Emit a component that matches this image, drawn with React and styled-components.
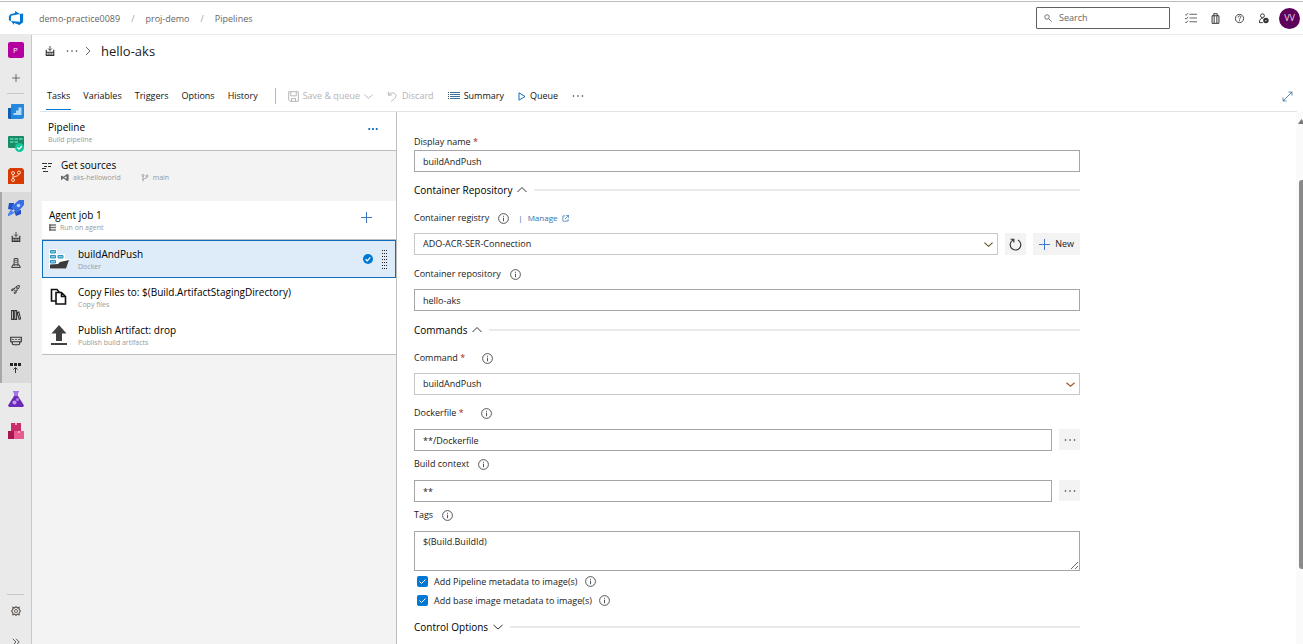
import React from 'react';
import styled, { createGlobalStyle } from 'styled-components';

const GlobalStyle = createGlobalStyle`
  *, *::before, *::after {
    margin: 0;
    padding: 0;
    box-sizing: border-box;
  }
  body {
    background: #fff;
    color: #212121;
    font-family: "Segoe UI", "Open Sans", "Noto Sans", sans-serif;
    font-size: 9px;
    line-height: 16px;
    overflow: hidden;
  }
  button, input, select, textarea {
    font: inherit;
    color: inherit;
  }
  button {
    background: none;
    border: none;
  }
  a {
    color: inherit;
    text-decoration: none;
  }
  svg {
    display: block;
    flex: none;
  }
`;

/* ---------- shell ---------- */

const Page = styled.div`
  display: flex;
  flex-direction: column;
  height: 100vh;
`;

const Header = styled.header`
  display: flex;
  align-items: center;
  flex: none;
  height: 34px;
  margin-top: 1px;
  padding: 0 3px 0 8px;
  border-top: 1px solid #bdbdbd;
  border-bottom: 1px solid #eaeaea;
`;

const Breadcrumb = styled.nav`
  display: flex;
  gap: 11px;
  flex: 1;
  margin-left: 15px;
  padding-top: 1px;
  color: #666;
`;

const Slash = styled.span`
  color: #a6a6a6;
`;

const SearchBox = styled.label`
  display: flex;
  align-items: center;
  gap: 7px;
  width: 134px;
  height: 22px;
  padding: 0 7px;
  border: 1px solid #5f5f5f;
  border-radius: 1px;

  input {
    flex: 1;
    min-width: 0;
    border: none;
    outline: none;
    background: none;
  }
  input::placeholder {
    color: #666;
    opacity: 1;
  }
`;

const HeaderActions = styled.div`
  display: flex;
  align-items: center;
  gap: 13px;
  margin: 0 10px 0 15px;
`;

const IconButton = styled.button`
  display: flex;
  align-items: center;
  justify-content: center;
  color: ${(p) => p.$color || '#333'};
`;

const Avatar = styled.button`
  width: 21px;
  height: 21px;
  border-radius: 50%;
  background: #5c005c;
  color: #e8d5e8;
`;

const Columns = styled.div`
  display: flex;
  flex: 1;
  min-height: 0;
`;

/* ---------- side bar ---------- */

const SideBar = styled.nav`
  display: flex;
  flex-direction: column;
  flex: none;
  width: 32px;
  background: #eaeaea;
  border-right: 1px solid #c8c8c8;
`;

const SideTop = styled.div`
  display: flex;
  flex-direction: column;
  align-items: center;
  flex: 1;
  min-height: 0;
`;

const Project = styled.a`
  width: 16px;
  height: 16px;
  margin-top: 7px;
  border-radius: 2px;
  background: #b4009e;
  color: #fff;
  font-size: 8px;
  text-align: center;
`;

const AddButton = styled(IconButton)`
  height: 35px;
  padding-top: 5px;
`;

const SideRule = styled.hr`
  width: 17px;
  margin-bottom: ${(p) => p.$below || 0}px;
  border: none;
  border-top: 1px solid #c8c8c8;
`;

const Hub = styled.a`
  display: flex;
  align-items: center;
  justify-content: center;
  width: 31px;
  height: 32px;
`;

const HubGroup = styled.div`
  width: 31px;
  padding-bottom: 3px;
  background: #dadada;
  border-left: 2px solid #a8a8a8;
`;

const GroupHub = styled(Hub)`
  width: 27px;
`;

const SubHub = styled(GroupHub)`
  height: 26px;
  color: #333;
`;

const SideBottom = styled.div`
  display: flex;
  flex-direction: column;
  align-items: center;
  height: 50px;
  overflow: hidden;
`;

const FootButton = styled(IconButton)`
  flex: none;
  height: 31px;
`;

/* ---------- title and tool bar ---------- */

const Main = styled.main`
  display: flex;
  flex-direction: column;
  flex: 1;
  min-width: 0;
`;

const TitleRow = styled.div`
  display: flex;
  align-items: center;
  height: 32px;
  padding-left: 13px;
  gap: 5px;
`;

const Crumb = styled.a`
  padding-right: 6px;
`;

const Title = styled.h1`
  margin-left: 3px;
  font-size: 13px;
  font-weight: 400;
`;

const ToolBar = styled.div`
  display: flex;
  align-items: flex-end;
  height: 45px;
  margin: 0 6px 0 8px;
  padding: 0 4px 0 6px;
  border-bottom: 1px solid #e4e4e4;
`;

const Tabs = styled.div`
  display: flex;
  gap: 11px;
`;

const Tab = styled.button`
  height: 25px;
  padding: 3px 1px 5px;
  border-bottom: 1px solid ${(p) => (p.$active ? '#0078d4' : 'transparent')};
  color: #111;
  margin-bottom: 1px;
`;

const Commands = styled.div`
  display: flex;
  align-items: center;
  flex: 1;
  gap: 14px;
  height: 16px;
  margin: 0 0 7px 16px;
  padding-left: 12px;
  border-left: 1px solid #b5b5b5;
`;

const Command = styled.button`
  display: flex;
  align-items: center;
  gap: 4px;
  color: #111;

  &:disabled {
    color: #b4b4b4;
  }
`;

const Expand = styled(IconButton)`
  margin-left: auto;
`;

const Workspace = styled.div`
  display: flex;
  flex: 1;
  min-height: 0;
`;

/* ---------- process list ---------- */

const Process = styled.section`
  flex: none;
  width: 365px;
  background: #f3f3f3;
  border-right: 1px solid #bdbdbd;
`;

const ProcessHead = styled.div`
  display: flex;
  justify-content: space-between;
  height: 39px;
  padding: 8px 18px 0 16px;
  background: #fff;
  border-bottom: 1px solid #bdbdbd;
`;

const HeadAction = styled(IconButton)`
  height: 18px;
`;

const Name = styled.div`
  color: #000;
  font-size: 10px;
  line-height: 14px;
`;

const Sub = styled.div`
  display: flex;
  align-items: center;
  gap: 4px;
  color: #999;
  font-size: 7px;
  line-height: 11px;
`;

const Sources = styled.div`
  display: flex;
  gap: 9px;
  height: 50px;
  padding: 7px 10px;

  > svg {
    margin-top: 5px;
  }
`;

const Branch = styled.span`
  display: flex;
  align-items: center;
  gap: 4px;
  margin-left: 16px;
`;

const Job = styled.div`
  margin-left: 10px;
  background: #fff;
  border-bottom: 1px solid #bdbdbd;
`;

const JobHead = styled.div`
  display: flex;
  justify-content: space-between;
  height: 39px;
  padding: 7px 24px 0 7px;
  border-bottom: 1px solid #bdbdbd;
`;

const Task = styled.div`
  display: flex;
  align-items: center;
  gap: 9px;
  height: 38px;
  padding: 0 8px 0 6px;
  border: 1px solid ${(p) => (p.$selected ? '#106ebe' : 'transparent')};
  background: ${(p) => (p.$selected ? '#deecf9' : 'transparent')};
`;

const TaskText = styled.div`
  flex: 1;
`;

/* ---------- settings form ---------- */

const Form = styled.form`
  flex: 1;
  min-width: 0;
  padding: 22px 0 0 17px;
  overflow: hidden;
`;

const Fields = styled.div`
  max-width: 666px;
`;

const LabelRow = styled.div`
  display: flex;
  align-items: center;
  gap: 9px;
  height: 16px;
  margin-bottom: ${(p) => p.$below || 0}px;
`;

const Required = styled.span`
  margin-right: 8px;
  color: #a4262c;
`;

const Manage = styled.a`
  display: flex;
  align-items: center;
  gap: 5px;
  color: #2f6fae;
  font-size: 8px;

  &::before {
    content: "|";
  }
`;

const ControlRow = styled.div`
  display: flex;
  gap: 7px;
  margin-bottom: ${(p) => p.$below}px;
`;

const TextInput = styled.input`
  flex: 1;
  min-width: 0;
  height: 22px;
  padding: 0 8px;
  border: 1px solid #a6a6a6;
  background: #fff;
`;

const TextArea = styled.textarea`
  display: block;
  width: 100%;
  height: 40px;
  padding: 2px 8px;
  border: 1px solid #a6a6a6;
  resize: vertical;
`;

const SelectWrap = styled.div`
  display: grid;
  flex: 1;
  align-items: center;

  > * {
    grid-area: 1 / 1;
  }
  svg {
    justify-self: end;
    margin-right: 5px;
    pointer-events: none;
  }
`;

const SelectBox = styled.select`
  appearance: none;
  height: 22px;
  padding: 0 8px;
  border: 1px solid #c8c8c8;
  background: #fff;
`;

const SquareButton = styled.button`
  display: flex;
  align-items: center;
  justify-content: center;
  gap: 5px;
  min-width: 21px;
  height: ${(p) => p.$height || 22}px;
  padding: 0 ${(p) => p.$pad || 0}px;
  background: #f3f3f3;
  color: #222;
`;

const SectionHead = styled.button`
  display: flex;
  align-items: center;
  width: 100%;
  height: 16px;
  gap: 5px;
  margin-bottom: 12px;
  color: #000;
  font-size: 10px;

  &::after {
    content: "";
    flex: 1;
    height: 2px;
    margin-left: 2px;
    background: #eaeaea;
  }
`;

const Checks = styled.div`
  padding: 1px 0 9px 3px;
`;

const CheckRow = styled.div`
  display: flex;
  align-items: center;
  gap: 7px;
  height: 19px;

  label {
    display: flex;
    align-items: center;
    gap: 6px;
  }
`;

const CheckMark = styled.span`
  display: grid;
  place-items: center;

  > * {
    grid-area: 1 / 1;
  }
  input {
    appearance: none;
    width: 11px;
    height: 11px;
    border-radius: 2px;
    background: #0078d4;
  }
  svg {
    pointer-events: none;
  }
`;

const ScrollTrack = styled.div`
  display: flex;
  flex-direction: column;
  align-items: flex-end;
  flex: none;
  width: 7px;
  padding-top: 7px;
  background: #fafafa;
  overflow: hidden;
`;

const ScrollThumb = styled.div`
  flex: none;
  width: 4px;
  height: 74%;
  margin-top: 56px;
  border-radius: 3px 0 0 3px;
  background: #8a8a8a;
`;

/* ---------- icons ---------- */

const Line = ({ size = 10, box = 16, w = 1.4, color = 'currentColor', children }) => (
  <svg
    width={size}
    height={size}
    viewBox={`0 0 ${box} ${box}`}
    fill="none"
    stroke={color}
    strokeWidth={w}
    aria-hidden="true"
  >
    {children}
  </svg>
);

const DevOpsLogo = () => (
  <svg width="16" height="16" viewBox="0 0 18 18" aria-hidden="true">
    <path fill="#0078d4" d="M17 4v9.700l-4 3.300-6.200-2.300V17L3.300 12.400l10.200.8V4.500zM13.600 4.500 7.900 1v2.300L2.600 4.900 1 6.900v4.700l2.300 1V6.500z" />
  </svg>
);

const Dots = ({ color = '#333', width = 12, r = 0.8 }) => (
  <svg width={width} height="4" viewBox="0 0 12 4" fill={color} aria-hidden="true">
    <circle cx="1.500" cy="2" r={r} />
    <circle cx="6" cy="2" r={r} />
    <circle cx="10.500" cy="2" r={r} />
  </svg>
);

const Chevron = ({ d, size = 10, color = '#333', w = 1 }) => (
  <Line size={size} box={10} w={w} color={color}>
    <path d={d} />
  </Line>
);

const UP = 'M.5 7 5 2.500 9.500 7';
const DOWN = 'M.5 3 5 7l4.500-4';

const InfoIcon = () => (
  <Line size={11} box={11} w={0.9} color="#444">
    <circle cx="5.500" cy="5.500" r="4.900" />
    <path d="M5.500 4.700v3.500M5.500 2.800v1" />
  </Line>
);

const PlusIcon = ({ color = '#3f78c9', size = 11 }) => (
  <Line size={size} box={11} w={1} color={color}>
    <path d="M5.500 0v11M0 5.500h11" />
  </Line>
);

const BuildIcon = () => (
  <Line size={10} color="#333">
    <path d="M8 0v7M5 4l3 3 3-3" />
    <path d="M2 6v9h12V6M2 10h12" strokeWidth="1.800" />
    <path d="M5 10v5M8 10v5M11 10v5" />
  </Line>
);

const OverviewIcon = () => (
  <svg width="16" height="16" viewBox="0 0 16 16" aria-hidden="true">
    <path fill="#0f5fb0" d="M0 4h11v11H1.500A1.500 1.500 0 0 1 0 13.500z" />
    <path fill="#2488dc" d="M4 0h12v12.500A2.500 2.500 0 0 1 13.500 15H3V1a1 1 0 0 1 1-1z" />
    <path fill="#b5dcfa" d="M5.500 9h2.500v2H5.500zM8 6.500h2.500V11H8zM10.500 3.500h3V11h-3z" />
  </svg>
);

const BoardsIcon = () => (
  <svg width="16" height="16" viewBox="0 0 16 16" aria-hidden="true">
    <rect width="16" height="12" rx="1" fill="#1b8a68" />
    <path fill="#45c79a" d="M2 2h3.500v2H2zM2 5h3.500v2H2zM6.500 2H10v2H6.500zM11 2h3.500v2H11zM6.500 5H10v2H6.500z" />
    <circle cx="11.500" cy="11.500" r="4.500" fill="#14c79a" />
    <path d="m9.300 11.500 1.700 1.700 3-3.200" fill="none" stroke="#fff" strokeWidth="1.200" />
  </svg>
);

const ReposIcon = () => (
  <svg width="16" height="16" viewBox="0 0 16 16" aria-hidden="true">
    <path fill="#d83b01" d="M2 0h12l2 2v14H0V2z" />
    <g fill="none" stroke="#ffd9c9" strokeWidth="1">
      <circle cx="5" cy="5" r="1.500" />
      <circle cx="11" cy="4.500" r="1.500" />
      <circle cx="5" cy="12" r="1.500" />
      <path d="M5 6.500v4M11 6c0 3-6 1.500-6 4.500" />
    </g>
  </svg>
);

const PipelinesIcon = () => (
  <svg width="16" height="16" viewBox="0 0 16 16" aria-hidden="true">
    <path fill="#2350c0" d="M6 3H1L0 9l5 1zM13 10v4l-5 2-2-5z" />
    <path fill="#3a6fe4" d="M16 0v5l-7 8-6-6 8-7z" />
    <path fill="#4f86ee" d="m3 9.500 3.500 3.500L1 16H0v-2z" />
    <circle cx="10.500" cy="5.500" r="1.800" fill="#bcd0ff" />
  </svg>
);

const TestIcon = () => (
  <svg width="16" height="16" viewBox="0 0 16 16" aria-hidden="true">
    <path fill="#a577e6" d="M5 0h6v1.500h-1V6H6V1.500H5z" />
    <path fill="#6a2bb8" d="M6 5h4l6 9.500-1 1.500H1L0 14.500z" />
    <circle cx="6.500" cy="11.500" r="2" fill="#c39bf2" />
    <circle cx="9.500" cy="8.500" r="1.500" fill="#b085ea" />
  </svg>
);

const ArtifactsIcon = () => (
  <svg width="16" height="16" viewBox="0 0 16 16" aria-hidden="true">
    <path fill="#cb2d6a" d="M3 0h10v8H3z" />
    <path fill="#a91752" d="M0 8h6v8H0z" />
    <path fill="#e85c92" d="M6 8h10v8H6z" />
    <path fill="#f7a3c3" d="M10 8h2v2h-2zM7 0h2v2H7z" />
  </svg>
);

const EnvIcon = () => (
  <Line size={10}>
    <path d="M5 12V1h6v11M1 15l2-4h10l2 4zM7 4h2M7 7h2" strokeWidth="1.600" />
  </Line>
);

const ReleaseIcon = () => (
  <Line size={9}>
    <path d="M15 1c-5 0-8 3-10 7l3 3c4-2 7-5 7-10zM6 7H2l-1 3h3M9 10v4l-3 1v-3" strokeWidth="1.700" />
    <circle cx="10.500" cy="5.500" r="1.500" />
  </Line>
);

const LibraryIcon = () => (
  <Line size={10}>
    <path d="M1 1v14h3V1zM6 1v14h3V1zM10 4l2.500-1 3 11-2.500 1z" strokeWidth="1.700" />
  </Line>
);

const TaskGroupIcon = () => (
  <Line size={12}>
    <path d="M1 3h14v6H1zM3 9v2c0 1 1 2 2 2h6c1 0 2-1 2-2V9M3 6h2M7 6h2M11 6h2" strokeWidth="1.600" />
  </Line>
);

const DeployIcon = () => (
  <svg width="11" height="11" viewBox="0 0 11 11" aria-hidden="true">
    <path fill="#222" d="M0 1h3v3H0zM4 1h3v3H4zM8 1h3v3H8z" />
    <path d="M5.500 11V6M3.500 7.500l2-2 2 2" fill="none" stroke="#333" />
  </svg>
);

const GearIcon = () => (
  <Line size={10} color="#5d5550">
    <circle cx="8" cy="8" r="2.500" />
    <path d="m8 1 2 2 3-1v3l2 3-2 3v3l-3-1-2 2-2-2-3 1v-3L1 8l2-3V2l3 1z" strokeWidth="1.800" />
  </Line>
);

const SourcesIcon = () => (
  <svg width="10" height="9" viewBox="0 0 10 9" stroke="#333" aria-hidden="true">
    <path d="M0 .5h5M6 .5h4M2 3.500h3M6 3.500h3M0 5.500h4M1 8.500h5" />
  </svg>
);

const VsIcon = () => (
  <svg width="8" height="7" viewBox="0 0 8 7" fill="none" stroke="#666" aria-hidden="true">
    <path d="M.5 2v3L6 .8v5.400L.5 2M7 .5v6" strokeWidth="1.200" />
  </svg>
);

const BranchIcon = () => (
  <Line size={8} color="#888">
    <circle cx="4" cy="3" r="2" />
    <circle cx="12" cy="4" r="2" />
    <path d="M4 5v10M12 6c0 4-8 2-8 6" />
  </Line>
);

const AgentIcon = () => (
  <svg width="7" height="7" viewBox="0 0 7 7" stroke="#777" aria-hidden="true">
    <path d="M0 1h7M0 3.500h7M0 6h7" strokeWidth="1.600" />
    <path d="M1 .5v6" stroke="#444" />
  </svg>
);

const DockerTaskIcon = () => (
  <svg width="20" height="20" viewBox="0 0 20 20" aria-hidden="true">
    <path fill="#fff" d="M0 0h8v5h8v5h4l-3 10H0z" />
    <path
      d="M1.500 1.500h5v2.500h-5zM1.500 6.500h5V9h-5zM9 6.500h5V9H9zM1.500 11.500h5V14h-5z"
      fill="#7fc8e8"
      stroke="#2f93bf"
    />
    <path fill="#3b3b3b" d="M1 15.500 9 15l2-2 9-2-3 8.500H1z" />
  </svg>
);

const CopyIcon = () => (
  <Line size={20} box={20} w={1.6} color="#111">
    <path d="M7 14H2.500V2.500H8l2.500 3" />
    <path d="M7 5.500h5.500L16.500 9.500V17H7zM12.500 5.500v4h4" />
  </Line>
);

const PublishIcon = () => (
  <svg width="20" height="22" viewBox="0 0 20 22" fill="#404040" aria-hidden="true">
    <path d="M10 1l7.500 8.500H13V17H7V9.500H2.500zM2 19h16v2H2z" />
  </svg>
);

const CheckBadge = () => (
  <svg width="10" height="10" viewBox="0 0 10 10" aria-hidden="true">
    <circle cx="5" cy="5" r="5" fill="#0078d4" />
    <path d="m2.600 5.200 1.700 1.600 3-3.400" fill="none" stroke="#fff" strokeWidth="1.200" />
  </svg>
);

const Grip = () => (
  <svg width="5" height="19" viewBox="0 0 5 19" stroke="#222" strokeDasharray="1 2" aria-hidden="true">
    <path d="M.5 0v19M2.500 0v19M4.500 0v19" />
  </svg>
);

const SaveIcon = () => (
  <Line size={11}>
    <path d="M1 1h14v14H3l-2-2zM4 1v6h8V1M5 15v-4h6v4" />
  </Line>
);

const UndoIcon = () => (
  <Line size={11}>
    <path d="M2 1v5h5M2 6c2-4 11-5 11 1 0 3-3 5-7 8" />
  </Line>
);

const SummaryIcon = () => (
  <svg width="12" height="8" viewBox="0 0 12 8" shapeRendering="crispEdges" aria-hidden="true">
    <path d="M0 .5h1M0 2.500h1M0 4.500h1M0 6.500h1" stroke="#555" />
    <path d="M2 .5h10M2 2.500h10M2 4.500h10M2 6.500h10" stroke="#3f6f9f" />
  </svg>
);

const PlayIcon = () => (
  <svg width="8" height="9" viewBox="0 0 8 9" fill="none" stroke="#106ebe" aria-hidden="true">
    <path d="M1 .8v7.400l6-3.700z" />
  </svg>
);

const Info = ({ about }) => (
  <IconButton type="button" aria-label={`About ${about}`}>
    <InfoIcon />
  </IconButton>
);

/* ---------- parts ---------- */

const tabs = ['Tasks', 'Variables', 'Triggers', 'Options', 'History'];

const subHubs = [
  ['Builds', BuildIcon],
  ['Environments', EnvIcon],
  ['Releases', ReleaseIcon],
  ['Library', LibraryIcon],
  ['Task groups', TaskGroupIcon],
  ['Deployment groups', DeployIcon],
];

const tasks = [
  { name: 'buildAndPush', type: 'Docker', Icon: DockerTaskIcon, selected: true },
  { name: 'Copy Files to: $(Build.ArtifactStagingDirectory)', type: 'Copy files', Icon: CopyIcon },
  { name: 'Publish Artifact: drop', type: 'Publish build artifacts', Icon: PublishIcon },
];

const checks = [
  ['pipelineMeta', 'Add Pipeline metadata to image(s)'],
  ['baseMeta', 'Add base image metadata to image(s)'],
];

function TopBar() {
  return (
    <Header>
      <a href="#home" aria-label="Azure DevOps">
        <DevOpsLogo />
      </a>
      <Breadcrumb>
        <a href="#org">demo-practice0089</a>
        <Slash>/</Slash>
        <a href="#project">proj-demo</a>
        <Slash>/</Slash>
        <a href="#pipelines">Pipelines</a>
      </Breadcrumb>
      <SearchBox>
        <Line size={8} color="#444">
          <circle cx="6" cy="6" r="4.500" />
          <path d="m9.500 9.500 6 6" />
        </Line>
        <input type="search" placeholder="Search" aria-label="Search" />
      </SearchBox>
      <HeaderActions>
        <IconButton aria-label="Work items">
          <Line size={12} w={1.1} color="#444">
            <path d="M6 3h10M6 8h10M6 13h10M0 3l1.500 1.500L4 1.500M0 8l1.500 1.500L4 6.500M0 13l1.500 1.500L4 11.500" />
          </Line>
        </IconButton>
        <IconButton aria-label="Marketplace">
          <Line size={11}>
            <path d="M3 4h10v11H3zM5.500 4V1h5v3M6 4v11M10 4v11" />
          </Line>
        </IconButton>
        <IconButton aria-label="Help">
          <Line size={11} color="#444">
            <circle cx="8" cy="8" r="6" />
            <path d="M6 6.500c0-3 4-3 4-.5 0 1.500-2 1.500-2 3.500M8 10.500V12" />
          </Line>
        </IconButton>
        <IconButton aria-label="User settings">
          <Line size={11}>
            <circle cx="6.500" cy="4" r="2.800" />
            <path d="M7 14H2c0-4 2-6.500 5-6.500" />
            <circle cx="11.500" cy="11" r="2.500" strokeWidth="3" />
          </Line>
        </IconButton>
      </HeaderActions>
      <Avatar aria-label="Account">VV</Avatar>
    </Header>
  );
}

function SideNav() {
  return (
    <SideBar>
      <SideTop>
        <Project href="#project">P</Project>
        <AddButton aria-label="Add">
          <PlusIcon color="#444" size={8} />
        </AddButton>
        <SideRule $below={2} />
        <Hub href="#overview" aria-label="Overview">
          <OverviewIcon />
        </Hub>
        <Hub href="#boards" aria-label="Boards">
          <BoardsIcon />
        </Hub>
        <Hub href="#repos" aria-label="Repos">
          <ReposIcon />
        </Hub>
        <HubGroup>
          <GroupHub href="#pipelines" aria-label="Pipelines">
            <PipelinesIcon />
          </GroupHub>
          {subHubs.map(([label, Icon]) => (
            <SubHub key={label} href="#hub" aria-label={label}>
              <Icon />
            </SubHub>
          ))}
        </HubGroup>
        <Hub href="#tests" aria-label="Test plans">
          <TestIcon />
        </Hub>
        <Hub href="#artifacts" aria-label="Artifacts">
          <ArtifactsIcon />
        </Hub>
      </SideTop>
      <SideBottom>
        <SideRule />
        <FootButton aria-label="Project settings">
          <GearIcon />
        </FootButton>
        <FootButton aria-label="Expand navigation">
          <Line size={8} box={10} w={1.2} color="#555">
            <path d="m1 1 4 4-4 4M5 1l4 4-4 4" />
          </Line>
        </FootButton>
      </SideBottom>
    </SideBar>
  );
}

function ProcessPanel() {
  return (
    <Process>
      <ProcessHead>
        <div>
          <Name>Pipeline</Name>
          <Sub>Build pipeline</Sub>
        </div>
        <HeadAction aria-label="Pipeline actions">
          <Dots color="#0063b1" width={10} r={1.3} />
        </HeadAction>
      </ProcessHead>
      <Sources>
        <SourcesIcon />
        <div>
          <Name>Get sources</Name>
          <Sub>
            <VsIcon />
            aks-helloworld
            <Branch>
              <BranchIcon />
              main
            </Branch>
          </Sub>
        </div>
      </Sources>
      <Job>
        <JobHead>
          <div>
            <Name>Agent job 1</Name>
            <Sub>
              <AgentIcon />
              Run on agent
            </Sub>
          </div>
          <HeadAction aria-label="Add a task">
            <PlusIcon />
          </HeadAction>
        </JobHead>
        {tasks.map(({ name, type, Icon, selected }) => (
          <Task key={name} $selected={selected}>
            <Icon />
            <TaskText>
              <Name>{name}</Name>
              <Sub>{type}</Sub>
            </TaskText>
            {selected && <CheckBadge />}
            {selected && <Grip />}
          </Task>
        ))}
      </Job>
    </Process>
  );
}

function TaskForm() {
  return (
    <Form>
      <Fields>
        <LabelRow>
          <label htmlFor="displayName">
            Display name <Required>*</Required>
          </label>
        </LabelRow>
        <ControlRow $below={10}>
          <TextInput id="displayName" defaultValue="buildAndPush" />
        </ControlRow>

        <SectionHead type="button">
          Container Repository
          <Chevron d={UP} />
        </SectionHead>
        <LabelRow $below={7}>
          <label htmlFor="registry">Container registry</label>
          <Info about="Container registry" />
          <Manage href="#manage">
            Manage
            <Line size={7} w={1.6}>
              <path d="M7 2H2v12h12V9M9 1h6v6M15 1 7 9" />
            </Line>
          </Manage>
        </LabelRow>
        <ControlRow $below={11}>
          <SelectWrap>
            <SelectBox id="registry">
              <option>ADO-ACR-SER-Connection</option>
            </SelectBox>
            <Chevron d={DOWN} size={9} color="#5a4a20" w={1.2} />
          </SelectWrap>
          <SquareButton type="button" aria-label="Refresh">
            <Line size={13} color="#333">
              <path d="M5 2.500A6.500 6.500 0 1 0 11 2.500M2 1.500h4v4" />
            </Line>
          </SquareButton>
          <SquareButton type="button" $pad={6}>
            <PlusIcon />
            New
          </SquareButton>
        </ControlRow>
        <LabelRow $below={7}>
          <label htmlFor="repository">Container repository</label>
          <Info about="Container repository" />
        </LabelRow>
        <ControlRow $below={11}>
          <TextInput id="repository" defaultValue="hello-aks" />
        </ControlRow>

        <SectionHead type="button">
          Commands
          <Chevron d={UP} />
        </SectionHead>
        <LabelRow $below={7}>
          <label htmlFor="command">
            Command <Required>*</Required>
          </label>
          <Info about="Command" />
        </LabelRow>
        <ControlRow $below={10}>
          <SelectWrap>
            <SelectBox id="command">
              <option>buildAndPush</option>
            </SelectBox>
            <Chevron d={DOWN} size={9} color="#9a5a30" w={1.3} />
          </SelectWrap>
        </ControlRow>
        <LabelRow $below={8}>
          <label htmlFor="dockerfile">
            Dockerfile <Required>*</Required>
          </label>
          <Info about="Dockerfile" />
        </LabelRow>
        <ControlRow $below={5}>
          <TextInput id="dockerfile" defaultValue="**/Dockerfile" />
          <SquareButton type="button" $height={21} aria-label="Browse Dockerfile">
            <Dots />
          </SquareButton>
        </ControlRow>
        <LabelRow $below={8}>
          <label htmlFor="context">Build context</label>
          <Info about="Build context" />
        </LabelRow>
        <ControlRow $below={5}>
          <TextInput id="context" defaultValue="**" />
          <SquareButton type="button" $height={21} aria-label="Browse build context">
            <Dots />
          </SquareButton>
        </ControlRow>
        <LabelRow $below={8}>
          <label htmlFor="tags">Tags</label>
          <Info about="Tags" />
        </LabelRow>
        <TextArea id="tags" defaultValue="$(Build.BuildId)" />
        <Checks>
          {checks.map(([id, text]) => (
            <CheckRow key={id}>
              <label htmlFor={id}>
                <CheckMark>
                  <input type="checkbox" id={id} defaultChecked />
                  <Line size={7} box={7} w={1} color="#fff">
                    <path d="m.5 3.500 2 2 4-4" />
                  </Line>
                </CheckMark>
                {text}
              </label>
              <Info about={text} />
            </CheckRow>
          ))}
        </Checks>
        <SectionHead type="button">
          Control Options
          <Chevron d={DOWN} />
        </SectionHead>
      </Fields>
    </Form>
  );
}

function App() {
  return (
    <Page>
      <GlobalStyle />
      <TopBar />
      <Columns>
        <SideNav />
        <Main>
          <TitleRow>
            <Crumb href="#builds" aria-label="Builds">
              <BuildIcon />
            </Crumb>
            <IconButton aria-label="More breadcrumbs">
              <Dots />
            </IconButton>
            <Chevron d="m3 1 4 4-4 4" color="#666" />
            <Title>hello-aks</Title>
          </TitleRow>
          <ToolBar>
            <Tabs role="tablist">
              {tabs.map((tab, i) => (
                <Tab key={tab} role="tab" aria-selected={i === 0} $active={i === 0}>
                  {tab}
                </Tab>
              ))}
            </Tabs>
            <Commands>
              <Command disabled>
                <SaveIcon />
                Save &amp; queue
                <Chevron d={DOWN} size={9} color="#b4b4b4" />
              </Command>
              <Command disabled>
                <UndoIcon />
                Discard
              </Command>
              <Command>
                <SummaryIcon />
                Summary
              </Command>
              <Command>
                <PlayIcon />
                Queue
              </Command>
              <IconButton aria-label="More commands">
                <Dots />
              </IconButton>
              <Expand aria-label="Full screen" $color="#3b6f9f">
                <Line size={11} w={1.2}>
                  <path d="M9.500 1.500h5v5M14.500 1.500l-13 13M1.500 9.500v5h5" />
                </Line>
              </Expand>
            </Commands>
          </ToolBar>
          <Workspace>
            <ProcessPanel />
            <TaskForm />
            <ScrollTrack>
              <svg width="5" height="5" viewBox="0 0 5 5" aria-hidden="true">
                <path d="M0 5 3.500 0 7 5z" fill="#777" />
              </svg>
              <ScrollThumb />
            </ScrollTrack>
          </Workspace>
        </Main>
      </Columns>
    </Page>
  );
}

export default App;
